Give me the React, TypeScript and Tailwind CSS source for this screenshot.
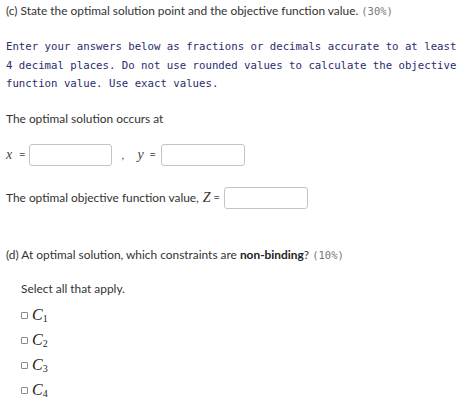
import React from "react";

const sans = "font-['Lato','Noto_Sans',sans-serif]";
const mono = "font-['DejaVu_Sans_Mono','Liberation_Mono',monospace]";
const mathF = "font-['Liberation_Serif','DejaVu_Serif',serif] italic";

function Box({ w }: { w: string }) {
  return <div className={`${w} h-[22px] rounded-[3px] border border-[#c4c4c4] bg-white`} />;
}

function Check({ n }: { n: string }) {
  return (
    <div className="flex h-[25px] items-center gap-[4px]">
      <div className="h-[7px] w-[7px] rounded-[1px] border border-[#8a8a8a]" />
      <div className="flex items-start">
        <span className={`${mathF} text-[16px] leading-[16px] text-[#222]`}>C</span>
        <span className="mt-[7px] font-['Liberation_Serif',serif] text-[10px] leading-[10px] text-[#222]">{n}</span>
      </div>
    </div>
  );
}

export default function App() {
  return (
    <div className={`${sans} h-[402px] w-[474px] bg-white pl-[6px] pt-[2px] text-[11.9px] text-[#333]`}>
      <div className="leading-[17px]">
        (c) State the optimal solution point and the objective function value.{" "}
        <span className={`${mono} text-[10.5px] text-[#777]`}>(30%)</span>
      </div>

      <div className={`${mono} mt-[18px] text-[10.7px] leading-[18.5px] text-[#2b2b6e]`}>
        Enter your answers below as fractions or decimals accurate to at least
        <br />4 decimal places. Do not use rounded values to calculate the objective
        <br />function value. Use exact values.
      </div>

      <div className="mt-[16px] leading-[18px]">The optimal solution occurs at</div>

      <div className="mt-[16px] flex items-center">
        <span className={`${mathF} w-[10px] text-[14px] text-[#444]`}>x</span>
        <span className="ml-[3px] text-[11px] text-[#666]">=</span>
        <div className="ml-[4px]">
          <Box w="w-[83px]" />
        </div>
        <span className="ml-[9px] w-[4px] text-[12px] text-[#555]">,</span>
        <span className={`${mathF} ml-[12px] w-[8px] text-[14px] text-[#444]`}>y</span>
        <span className="ml-[4px] text-[11px] text-[#666]">=</span>
        <div className="ml-[5px]">
          <Box w="w-[84px]" />
        </div>
      </div>

      <div className="mt-[21px] flex items-center">
        <span>The optimal objective function value,</span>
        <span className={`${mathF} ml-[4px] text-[14px] text-[#333]`}>Z</span>
        <span className="ml-[3px] text-[11px] text-[#666]">=</span>
        <div className="ml-[4px]">
          <Box w="w-[84px]" />
        </div>
      </div>

      <div className="mt-[37px] leading-[18px]">
        (d) At optimal solution, which constraints are <b className="font-bold text-[#222]">non-binding</b>?{" "}
        <span className={`${mono} text-[10.5px] text-[#777]`}>(10%)</span>
      </div>

      <div className="ml-[15px] mt-[16px]">
        <div className="leading-[18px]">Select all that apply.</div>
        <div className="mt-[5px]">
          <Check n="1" />
          <Check n="2" />
          <Check n="3" />
          <Check n="4" />
        </div>
      </div>
    </div>
  );
}
